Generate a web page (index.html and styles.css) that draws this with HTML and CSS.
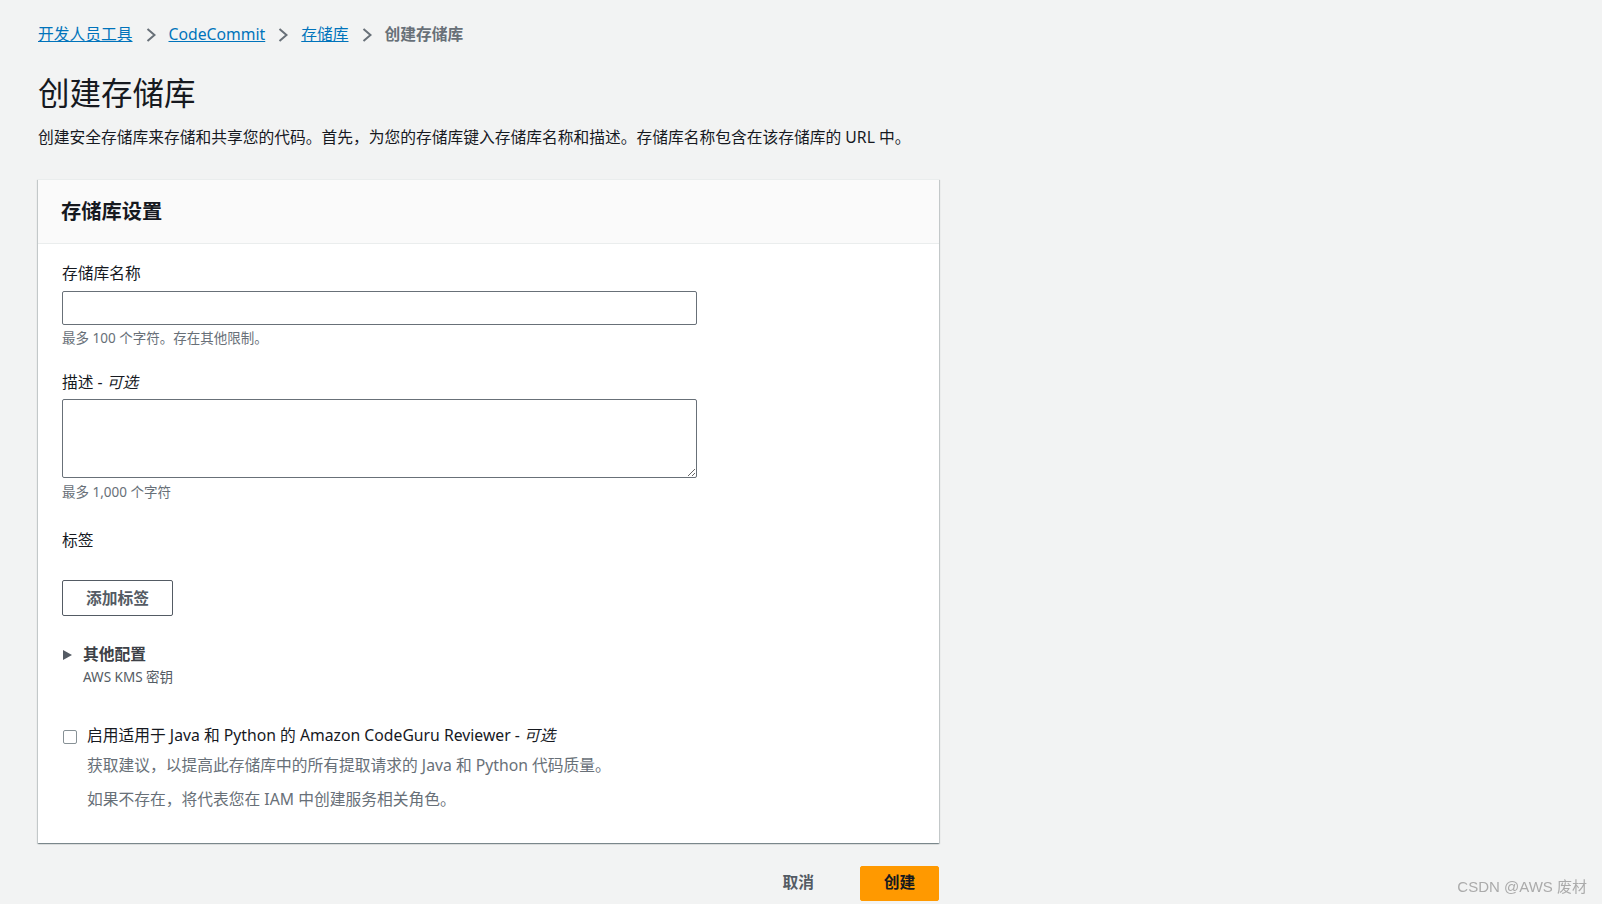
FILE: index.html
```html
<!DOCTYPE html>
<html lang="zh-CN">
<head>
    <meta charset="UTF-8">
    <meta name="viewport" content="width=device-width, initial-scale=1.0">
    <title>创建存储库</title>
    <link rel="stylesheet" href="styles.css">
</head>
<body>
    <div class="page">
        <nav class="breadcrumbs">
            <a href="#">开发人员工具</a>
            <svg class="chevron" width="10" height="14" viewBox="0 0 10 14"><path d="M1.5 1 L8.5 7 L1.5 13" /></svg>
            <a href="#">CodeCommit</a>
            <svg class="chevron" width="10" height="14" viewBox="0 0 10 14"><path d="M1.5 1 L8.5 7 L1.5 13" /></svg>
            <a href="#">存储库</a>
            <svg class="chevron" width="10" height="14" viewBox="0 0 10 14"><path d="M1.5 1 L8.5 7 L1.5 13" /></svg>
            <span class="current">创建存储库</span>
        </nav>

        <h1 class="page-title">创建存储库</h1>
        <p class="page-desc">创建安全存储库来存储和共享您的代码。首先，为您的存储库键入存储库名称和描述。存储库名称包含在该存储库的 URL 中。</p>

        <div class="panel">
            <div class="panel-header">
                <h2>存储库设置</h2>
            </div>
            <div class="panel-body">
                <div class="field">
                    <label class="field-label" for="repo-name">存储库名称</label>
                    <input class="text-input" type="text" id="repo-name">
                    <div class="hint">最多 100 个字符。存在其他限制。</div>
                </div>

                <div class="field field-desc">
                    <label class="field-label" for="repo-desc">描述 - <i>可选</i></label>
                    <textarea class="text-area" id="repo-desc"></textarea>
                    <div class="hint hint-desc">最多 1,000 个字符</div>
                </div>

                <div class="tags">
                    <div class="field-label">标签</div>
                    <button class="btn-normal">添加标签</button>
                </div>

                <div class="expander">
                    <div class="expander-head">
                        <svg class="caret" width="9" height="10" viewBox="0 0 9 10"><path d="M0 0 L9 5 L0 10 Z" /></svg>
                        <span>其他配置</span>
                    </div>
                    <div class="expander-sub">AWS KMS 密钥</div>
                </div>

                <div class="check">
                    <label class="check-row">
                        <input type="checkbox">
                        <span>启用适用于 Java 和 Python 的 Amazon CodeGuru Reviewer - <i>可选</i></span>
                    </label>
                    <p class="check-desc">获取建议，以提高此存储库中的所有提取请求的 Java 和 Python 代码质量。</p>
                    <p class="check-desc check-desc-2">如果不存在，将代表您在 IAM 中创建服务相关角色。</p>
                </div>
            </div>
        </div>

        <div class="actions">
            <button class="btn-link">取消</button>
            <button class="btn-primary">创建</button>
        </div>
    </div>

    <div class="watermark">CSDN @AWS 废材</div>
</body>
</html>
```

FILE: styles.css
```css
body {
    margin: 0;
    background-color: #f2f3f3;
    font-family: "Noto Sans", "Noto Sans CJK SC", sans-serif;
    font-size: 15.75px;
    color: #16191f;
}
.page {
    width: 901px;
    padding: 23px 0 0 38px;
}
.breadcrumbs {
    display: flex;
    align-items: center;
    gap: 13px;
    height: 22px;
    line-height: 22px;
}
.breadcrumbs a {
    color: #0073bb;
    text-decoration: underline;
}
.breadcrumbs .current {
    color: #687078;
    font-weight: 700;
}
.chevron {
    margin-top: 2px;
}
.chevron path {
    fill: none;
    stroke: #687078;
    stroke-width: 2;
}
.page-title {
    margin: 27.5px 0 0;
    font-size: 31.5px;
    line-height: 40px;
    font-weight: 400;
}
.page-desc {
    margin: 13px 0 0;
    line-height: 22px;
}
.panel {
    margin-top: 31.5px;
    background-color: #fff;
    border-top: 1px solid #eaeded;
    box-shadow: 0 1px 1px 0 rgba(0, 28, 36, 0.3), 1px 1px 1px 0 rgba(0, 28, 36, 0.15), -1px 1px 1px 0 rgba(0, 28, 36, 0.15);
}
.panel-header {
    box-sizing: border-box;
    height: 64px;
    padding: 0 23px 2px;
    display: flex;
    align-items: center;
    background-color: #fafafa;
    border-bottom: 1px solid #eaeded;
}
.panel-header h2 {
    margin: 0;
    font-size: 20.25px;
    line-height: 24px;
    font-weight: 700;
}
.panel-body {
    padding: 18px 24px 33px;
}
.field-label {
    display: block;
    line-height: 22px;
}
.text-input,
.text-area {
    display: block;
    box-sizing: border-box;
    width: 635px;
    margin: 7px 0 0;
    border: 1px solid #687078;
    border-radius: 2px;
    font: inherit;
}
.text-input {
    height: 34px;
}
.text-area {
    height: 79px;
    margin-top: 6.5px;
    resize: vertical;
}
.hint {
    margin-top: 4px;
    font-size: 13.5px;
    line-height: 18px;
    color: #687078;
}
.hint-desc {
    margin-top: 4.5px;
}
.field-desc {
    margin-top: 23.5px;
}
.tags {
    margin-top: 28.5px;
}
.btn-normal {
    display: block;
    box-sizing: border-box;
    height: 36px;
    margin-top: 29px;
    padding: 0 23px 2px;
    background-color: #fff;
    border: 1px solid #545b64;
    border-radius: 2px;
    font: inherit;
    font-weight: 700;
    color: #545b64;
}
.expander {
    margin-top: 26.5px;
}
.expander-head {
    display: flex;
    align-items: center;
    line-height: 22px;
    font-weight: 700;
    color: #3d4147;
}
.caret {
    margin: 2px 11px 0 1px;
    fill: #545b64;
}
.expander-sub {
    margin-top: 3px;
    padding-left: 21px;
    font-size: 13.5px;
    line-height: 18px;
    color: #545b64;
}
.check {
    margin-top: 38.5px;
}
.check-row {
    display: flex;
    align-items: center;
    line-height: 22px;
}
.check-row input {
    appearance: none;
    box-sizing: border-box;
    width: 14px;
    height: 14px;
    margin: 3px 10px 0 1px;
    border: 1px solid #879196;
    border-radius: 2px;
    background-color: #fff;
}
.check-desc {
    margin: 7.5px 0 0;
    padding-left: 25px;
    line-height: 22px;
    color: #687078;
}
.check-desc-2 {
    margin-top: 12.5px;
}
.actions {
    display: flex;
    justify-content: flex-end;
    align-items: center;
    gap: 23px;
    margin-top: 23px;
}
.btn-link {
    box-sizing: border-box;
    height: 35px;
    padding: 0 23px 4px;
    background: none;
    border: none;
    font: inherit;
    font-weight: 700;
    color: #545b64;
}
.btn-primary {
    box-sizing: border-box;
    width: 79px;
    height: 35px;
    padding: 0 0 4px;
    background-color: #ff9900;
    border: 1px solid #ff9900;
    border-radius: 2px;
    font: inherit;
    font-weight: 700;
    color: #16191f;
}
.watermark {
    position: fixed;
    right: 15px;
    bottom: 8px;
    font-family: "Liberation Sans", "Noto Sans CJK SC", sans-serif;
    font-size: 15px;
    line-height: 18px;
    color: #ababab;
}
```
